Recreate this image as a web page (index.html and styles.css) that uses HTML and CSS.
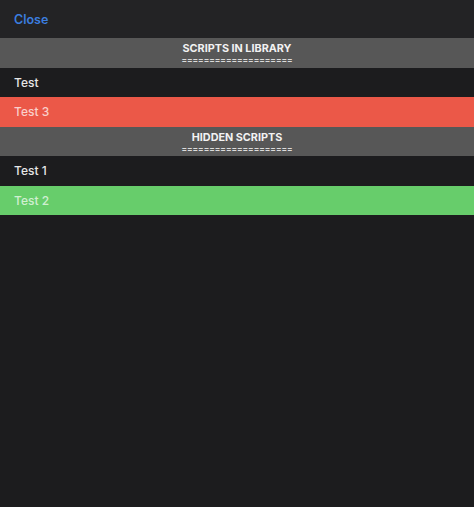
FILE: index.html
```html
<!DOCTYPE html>
<html>
<head>
<meta charset="utf-8">
<link rel="stylesheet" href="styles.css">
</head>
<body>
<div class="app">
  <div class="topbar"><span class="close">Close</span></div>
  <div class="section">
    <div class="section-title">SCRIPTS IN LIBRARY</div>
    <div class="section-rule">====================</div>
  </div>
  <div class="row">Test</div>
  <div class="row row-red">Test 3</div>
  <div class="section">
    <div class="section-title">HIDDEN SCRIPTS</div>
    <div class="section-rule">====================</div>
  </div>
  <div class="row">Test 1</div>
  <div class="row row-green">Test 2</div>
  <div class="rest"></div>
</div>
</body>
</html>
```

FILE: styles.css
```css
html, body {
  margin: 0;
  padding: 0;
  background: #1c1c1e;
  height: 100%;
}
body {
  font-family: Inter, "Liberation Sans", sans-serif;
}
.app {
  display: flex;
  flex-direction: column;
  height: 507px;
  background: #1c1c1e;
}
.topbar {
  height: 38px;
  background: #232325;
  display: flex;
  align-items: center;
  padding-left: 14px;
}
.close {
  color: #3b7ddf;
  font-size: 12.5px;
  font-weight: 600;
}
.section {
  height: 29.5px;
  background: #575757;
  display: flex;
  flex-direction: column;
  align-items: center;
  justify-content: center;
  color: #f2f2f2;
}
.section-title {
  font-size: 10.8px;
  font-weight: 700;
  line-height: 13px;
  margin-top: 2px;
}
.section-rule {
  font-size: 8.2px;
  font-weight: 700;
  line-height: 9px;
  color: #dcdcdc;
  margin-top: 1px;
}
.row {
  height: 29.5px;
  display: flex;
  align-items: center;
  padding-left: 14px;
  font-size: 12px;
  font-weight: 500;
  color: #e6e6e6;
  background: #1c1c1e;
}
.row-red {
  background: #eb5848;
  color: rgba(255, 255, 255, 0.72);
}
.row-green {
  background: #67cd6b;
  color: rgba(255, 255, 255, 0.7);
}
.rest {
  flex: 1;
}
```
